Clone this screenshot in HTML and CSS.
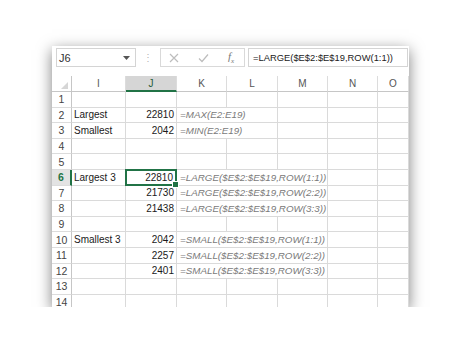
FILE: index.html
```html
<!DOCTYPE html>
<html lang="en">
<head>
  <meta charset="UTF-8">
  <title>LARGE and SMALL</title>
  <link rel="stylesheet" href="styles.css">
</head>
<body>
  <div class="sheet">
    <div class="formula-bar">
      <div class="name-box">
        <span>J6</span>
        <svg class="caret" width="7" height="4" viewBox="0 0 7 4"><path d="M0 0h7L3.5 4z" fill="#555"/></svg>
      </div>
      <div class="grip">⋮</div>
      <div class="fx-buttons">
        <svg width="10" height="10" viewBox="0 0 10 10"><path d="M1 1l8 8M9 1L1 9" stroke="#bdbdbd" stroke-width="1.2" fill="none"/></svg>
        <svg width="11" height="10" viewBox="0 0 11 10"><path d="M1 5.5l3 3L10 1.5" stroke="#bdbdbd" stroke-width="1.2" fill="none"/></svg>
        <span class="fx">f<sub>x</sub></span>
      </div>
      <div class="formula-input">=LARGE($E$2:$E$19,ROW(1:1))</div>
    </div>

    <div class="grid">
      <div class="corner"><svg width="7" height="7" viewBox="0 0 7 7"><path d="M7 0v7H0z" fill="#d6d6d6"/></svg></div>
      <div class="col-head">I</div>
      <div class="col-head selected">J</div>
      <div class="col-head">K</div>
      <div class="col-head">L</div>
      <div class="col-head">M</div>
      <div class="col-head">N</div>
      <div class="col-head">O</div>

      <div class="row-head">1</div>
      <div class="cell"></div><div class="cell"></div><div class="cell"></div><div class="cell"></div><div class="cell"></div><div class="cell"></div><div class="cell"></div>

      <div class="row-head">2</div>
      <div class="cell">Largest</div><div class="cell num">22810</div><div class="cell formula span-2">=MAX(E2:E19)</div><div class="cell"></div><div class="cell"></div><div class="cell"></div>

      <div class="row-head">3</div>
      <div class="cell">Smallest</div><div class="cell num">2042</div><div class="cell formula span-2">=MIN(E2:E19)</div><div class="cell"></div><div class="cell"></div><div class="cell"></div>

      <div class="row-head">4</div>
      <div class="cell"></div><div class="cell"></div><div class="cell"></div><div class="cell"></div><div class="cell"></div><div class="cell"></div><div class="cell"></div>

      <div class="row-head">5</div>
      <div class="cell"></div><div class="cell"></div><div class="cell"></div><div class="cell"></div><div class="cell"></div><div class="cell"></div><div class="cell"></div>

      <div class="row-head selected">6</div>
      <div class="cell">Largest 3</div><div class="cell num active">22810</div><div class="cell formula span-3">=LARGE($E$2:$E$19,ROW(1:1))</div><div class="cell"></div><div class="cell"></div>

      <div class="row-head">7</div>
      <div class="cell"></div><div class="cell num">21730</div><div class="cell formula span-3">=LARGE($E$2:$E$19,ROW(2:2))</div><div class="cell"></div><div class="cell"></div>

      <div class="row-head">8</div>
      <div class="cell"></div><div class="cell num">21438</div><div class="cell formula span-3">=LARGE($E$2:$E$19,ROW(3:3))</div><div class="cell"></div><div class="cell"></div>

      <div class="row-head">9</div>
      <div class="cell"></div><div class="cell"></div><div class="cell"></div><div class="cell"></div><div class="cell"></div><div class="cell"></div><div class="cell"></div>

      <div class="row-head">10</div>
      <div class="cell">Smallest 3</div><div class="cell num">2042</div><div class="cell formula span-3">=SMALL($E$2:$E$19,ROW(1:1))</div><div class="cell"></div><div class="cell"></div>

      <div class="row-head">11</div>
      <div class="cell"></div><div class="cell num">2257</div><div class="cell formula span-3">=SMALL($E$2:$E$19,ROW(2:2))</div><div class="cell"></div><div class="cell"></div>

      <div class="row-head">12</div>
      <div class="cell"></div><div class="cell num">2401</div><div class="cell formula span-3">=SMALL($E$2:$E$19,ROW(3:3))</div><div class="cell"></div><div class="cell"></div>

      <div class="row-head">13</div>
      <div class="cell"></div><div class="cell"></div><div class="cell"></div><div class="cell"></div><div class="cell"></div><div class="cell"></div><div class="cell"></div>

      <div class="row-head">14</div>
      <div class="cell"></div><div class="cell"></div><div class="cell"></div><div class="cell"></div><div class="cell"></div><div class="cell"></div><div class="cell"></div>
    </div>
  </div>
</body>
</html>
```

FILE: styles.css
```css
* {
  box-sizing: border-box;
  margin: 0;
  padding: 0;
}

body {
  background: #fff;
  font-family: 'Liberation Sans', Arial, sans-serif;
  color: #1a1a1a;
  padding: 46px 0 0 52px;
}

.sheet {
  width: 357px;
  height: 261px;
  background: #fff;
  overflow: hidden;
  box-shadow: 0 4px 14px rgba(0,0,0,0.5);
}

/* Formula bar */
.formula-bar {
  height: 30px;
  display: flex;
  align-items: flex-start;
  padding: 2px 1px 0 4px;
}

.name-box {
  width: 80px;
  height: 19px;
  border: 1px solid #d4d4d4;
  display: flex;
  align-items: center;
  justify-content: space-between;
  padding: 0 5px 0 2px;
  font-size: 11px;
  color: #333;
}

.grip {
  width: 24px;
  height: 19px;
  text-align: center;
  line-height: 19px;
  font-size: 10px;
  color: #b5b5b5;
}

.fx-buttons {
  width: 85px;
  height: 19px;
  border: 1px solid #d9d9d9;
  display: flex;
  align-items: center;
  padding-left: 8px;
  gap: 19px;
}

.fx {
  font-family: 'Liberation Serif', serif;
  font-style: italic;
  font-size: 11px;
  color: #777;
}

.fx sub {
  font-size: 7px;
}

.formula-input {
  flex: 1;
  margin-left: 3px;
  height: 19px;
  border: 1px solid #d4d4d4;
  padding-left: 4px;
  line-height: 17px;
  font-size: 9.4px;
  color: #222;
  white-space: nowrap;
  overflow: hidden;
}

/* Grid */
.grid {
  display: grid;
  grid-template-columns: 20px 54px 51px 50px 51px 50px 50px 31px;
  grid-template-rows: 16px;
  grid-auto-rows: 15.6px;
}

.corner, .col-head {
  border-right: 1px solid #dcdcdc;
  border-bottom: 1px solid #c6c6c6;
  display: flex;
  align-items: center;
  justify-content: center;
  font-size: 10px;
  color: #555;
}

.corner {
  justify-content: flex-end;
  align-items: flex-end;
  padding: 0 3px 2px 0;
  border-right-color: #c6c6c6;
}

.col-head.selected {
  background: #d6d6d6;
  border-bottom: 2px solid #217346;
  color: #1f5c38;
}

.row-head {
  border-right: 1px solid #c6c6c6;
  border-bottom: 1px solid #dcdcdc;
  display: flex;
  align-items: center;
  justify-content: center;
  font-size: 10.5px;
  color: #444;
}

.row-head.selected {
  background: #e3e3e3;
  border-right: 2px solid #217346;
  color: #217346;
  font-weight: bold;
}

.cell {
  border-right: 1px solid #dadada;
  border-bottom: 1px solid #dadada;
  display: flex;
  align-items: center;
  padding: 0 2px;
  font-size: 10px;
  white-space: nowrap;
}

.cell.num {
  justify-content: flex-end;
}

.cell.formula {
  padding-left: 3px;
  font-style: italic;
  color: #7a7a7a;
  font-size: 9.8px;
}

.span-2 {
  grid-column: span 2;
}

.span-3 {
  grid-column: span 3;
}

.cell.active {
  position: relative;
  border: 2px solid #217346;
  margin: -1px 0 0 -1px;
}

.cell.active::after {
  content: '';
  position: absolute;
  right: -4px;
  bottom: -4px;
  width: 5px;
  height: 5px;
  background: #217346;
  border: 1px solid #fff;
}
```
